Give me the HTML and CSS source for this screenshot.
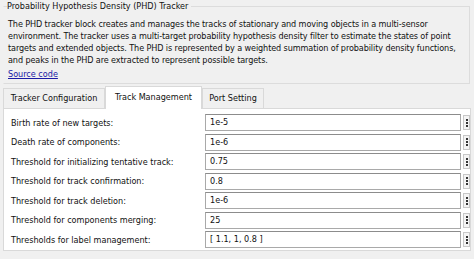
FILE: index.html
```html
<!DOCTYPE html>
<html>
<head>
<meta charset="utf-8">
<link rel="stylesheet" href="styles.css">
</head>
<body>
<div class="page">
  <fieldset class="group">
    <legend class="group-title">Probability Hypothesis Density (PHD) Tracker</legend>
    <p class="desc">The PHD tracker block creates and manages the tracks of stationary and moving objects in a multi-sensor environment. The tracker uses a multi-target probability hypothesis density filter to estimate the states of point targets and extended objects. The PHD is represented by a weighted summation of probability density functions, and peaks in the PHD are extracted to represent possible targets.</p>
    <a class="link" href="#">Source code</a>
  </fieldset>

  <div class="tabs">
    <div class="tab t1">Tracker Configuration</div>
    <div class="tab t2 active">Track Management</div>
    <div class="tab t3">Port Setting</div>
  </div>
  <div class="panel">
    <div class="row"><span class="label">Birth rate of new targets:</span><div class="field">1e-5</div><div class="dots"><i></i><i></i><i></i></div></div>
    <div class="row"><span class="label">Death rate of components:</span><div class="field">1e-6</div><div class="dots"><i></i><i></i><i></i></div></div>
    <div class="row"><span class="label">Threshold for initializing tentative track:</span><div class="field">0.75</div><div class="dots"><i></i><i></i><i></i></div></div>
    <div class="row"><span class="label">Threshold for track confirmation:</span><div class="field">0.8</div><div class="dots"><i></i><i></i><i></i></div></div>
    <div class="row"><span class="label">Threshold for track deletion:</span><div class="field">1e-6</div><div class="dots"><i></i><i></i><i></i></div></div>
    <div class="row"><span class="label">Threshold for components merging:</span><div class="field">25</div><div class="dots"><i></i><i></i><i></i></div></div>
    <div class="row"><span class="label">Thresholds for label management:</span><div class="field">[ 1.1, 1, 0.8 ]</div><div class="dots"><i></i><i></i><i></i></div></div>
  </div>
</div>
</body>
</html>
```
FILE: styles.css
```css
* { box-sizing: border-box; }
html, body {
  margin: 0;
  padding: 0;
  background: #f0f0f0;
}
body {
  font-family: "DejaVu Sans Condensed", "DejaVu Sans", sans-serif;
  font-stretch: condensed;
  font-size: 9px;
  color: #111;
}
.page {
  width: 474px;
  height: 259px;
  overflow: hidden;
  padding: 0 3px;
}
.group {
  margin: 0;
  border: 1px solid #dcdcdc;
  border-left-color: #f0f0f0;
  padding: 1px 3px 0 4px;
  min-width: 0;
  width: 467px;
  height: 84px;
}
.group-title {
  padding: 0 3px 0 0;
  margin-left: -1px;
  line-height: 13px;
}
.desc {
  margin: 4px 0 0 0;
  line-height: 12px;
  letter-spacing: -0.1px;
}
.link {
  display: inline-block;
  margin-top: 2px;
  color: #1a1aa6;
  text-decoration: underline;
  line-height: 13px;
}
.tabs {
  display: flex;
  align-items: flex-end;
  height: 22px;
  margin-top: 2px;
  position: relative;
  z-index: 1;
}
.tab {
  height: 20px;
  line-height: 19px;
  padding: 0;
  text-align: center;
  white-space: nowrap;
  border: 1px solid #d9d9d9;
  border-bottom: none;
  background: #f0f0f0;
}
.t1 { width: 102px; }
.t2 { width: 97px; }
.t3 { width: 62px; }
.tab.active {
  height: 23px;
  line-height: 21px;
  background: #fff;
  margin-bottom: -1px;
}
.panel {
  width: 468px;
  height: 143px;
  background: #fff;
  border: 1px solid #d9d9d9;
  padding: 4px 0 0 7px;
  display: flex;
  flex-direction: column;
}
.row {
  display: flex;
  align-items: center;
  height: 19.5px;
}
.label {
  width: 194px;
}
.field {
  width: 256px;
  height: 17px;
  border: 1px solid #a9a9a9;
  border-top-color: #8c8c8c;
  background: #fff;
  padding: 0 4px;
  line-height: 15px;
}
.dots {
  margin-left: 2px;
  width: 7px;
  height: 15px;
  border: 1px solid #c8c8c8;
  background: #f4f4f4;
  display: flex;
  flex-direction: column;
  align-items: center;
  justify-content: center;
  gap: 1px;
}
.dots i {
  display: block;
  width: 2px;
  height: 2px;
  background: #333;
}
```
